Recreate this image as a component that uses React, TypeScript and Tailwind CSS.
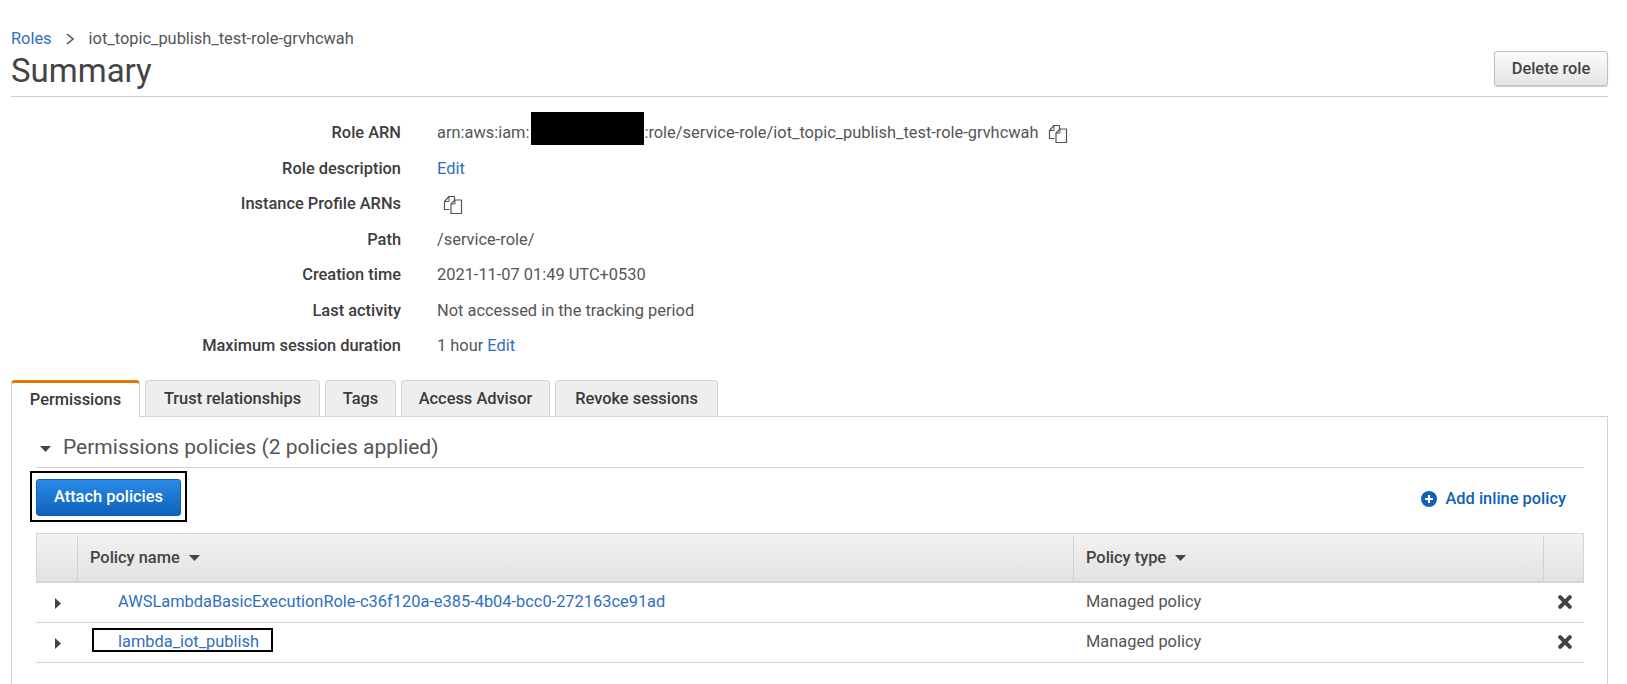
import React from "react";

const BLUE = "text-[#2f6fbd]";

function CopyIcon() {
  return (
    <svg width="20" height="20" viewBox="0 0 20 20" fill="none" stroke="#555" strokeWidth="1.2" strokeLinejoin="round">
      <path d="M6.5 14.5H1.5V6.5L6 1.5H11.5V5.5" fill="#fff" />
      <path d="M1.5 6.5H6V1.5" strokeWidth="1" />
      <path d="M8 9L12 5H18.5V18.5H8Z" fill="#fff" />
      <path d="M8 9H12V5" strokeWidth="1" />
    </svg>
  );
}

function Row({ label, children }: { label: string; children: React.ReactNode }) {
  return (
    <div className="flex h-[35.5px] items-center text-[16.4px]">
      <div className="w-[390px] text-right font-medium text-[#3d3d3d]">{label}</div>
      <div className="ml-[36px] flex items-center text-[#555]">{children}</div>
    </div>
  );
}

function Caret({ dir = "down", color = "#444" }: { dir?: "down" | "right"; color?: string }) {
  return dir === "down" ? (
    <svg width="11" height="6" viewBox="0 0 11 6"><path d="M0 0H11L5.5 6Z" fill={color} /></svg>
  ) : (
    <svg width="6" height="11" viewBox="0 0 6 11"><path d="M0 0L6 5.5L0 11Z" fill={color} /></svg>
  );
}

function XIcon() {
  return (
    <svg width="14" height="14" viewBox="0 0 14 14">
      <path d="M2.2 2.2L11.8 11.8M11.8 2.2L2.2 11.8" stroke="#444" strokeWidth="4" strokeLinecap="round" />
    </svg>
  );
}

function Tab({ label, width, active }: { label: string; width: string; active?: boolean }) {
  return active ? (
    <div className={`${width} -mb-px h-[37px] flex items-center justify-center rounded-t-[4px] border-x border-[#d5d5d5] border-t-[3px] border-t-[#e07b00] bg-white pt-[1px] text-[16.4px] font-medium text-[#3a3a3a] z-10`}>
      {label}
    </div>
  ) : (
    <div className={`${width} h-[36px] flex items-center justify-center rounded-t-[4px] border border-b-0 border-[#d5d5d5] bg-[#eeeeee] pt-[2px] text-[16.4px] font-medium text-[#3a3a3a]`}>
      {label}
    </div>
  );
}

function PolicyRow({ name, boxed }: { name: string; boxed?: boolean }) {
  return (
    <div className="flex h-[40px] items-center border-b border-[#d5d5d5] text-[16.4px]">
      <div className="flex w-[41px] justify-center pl-[2px] pt-[2px]"><Caret dir="right" /></div>
      <div className="relative w-[996px] pl-[41px]">
        <span className={BLUE}>{name}</span>
        {boxed && <div className="absolute left-[15px] top-[-2px] h-[24px] w-[181px] border-2 border-black" />}
      </div>
      <div className="w-[470px] pl-[13px] text-[#555]">Managed policy</div>
      <div className="flex flex-1 justify-center pl-[2px]"><XIcon /></div>
    </div>
  );
}

export default function App() {
  return (
    <div className="h-[684px] overflow-hidden bg-white pl-[11px] pr-[19px] pt-[29px] font-['Roboto','Liberation_Sans',sans-serif]">
      <div className="relative border-b border-[#cfcfcf] h-[68px]">
        <div className="flex items-center text-[16.4px] h-[20px]">
          <span className={BLUE}>Roles</span>
          <svg className="ml-[14px] mr-[15px]" width="8" height="12" viewBox="0 0 8 12" fill="none" stroke="#555" strokeWidth="1.5"><path d="M1 1L7 6L1 11" /></svg>
          <span className="text-[#555]">iot_topic_publish_test-role-grvhcwah</span>
        </div>
        <div className="text-[33px] leading-[38px] text-[#444] mt-[3px]">Summary</div>
        <button className="absolute right-0 top-[22px] h-[35px] w-[114px] rounded-[3px] border border-[#c0c0c0] bg-gradient-to-b from-[#fafafa] to-[#e6e6e6] pt-[1px] text-[16.4px] font-medium text-[#444] shadow-[0_1px_1px_rgba(0,0,0,0.2)]">
          Delete role
        </button>
      </div>

      <div className="pt-[19px]">
        <Row label="Role ARN">
          <span>arn:aws:iam:</span>
          <span className="ml-[2px] mb-[10px] inline-block h-[33px] w-[113px] bg-black" />
          <span>:role/service-role/iot_topic_publish_test-role-grvhcwah</span>
          <span className="ml-[10px] mt-[1px]"><CopyIcon /></span>
        </Row>
        <Row label="Role description"><span className={BLUE}>Edit</span></Row>
        <Row label="Instance Profile ARNs"><span className="ml-[6px]"><CopyIcon /></span></Row>
        <Row label="Path"><span>/service-role/</span></Row>
        <Row label="Creation time"><span>2021-11-07 01:49 UTC+0530</span></Row>
        <Row label="Last activity"><span>Not accessed in the tracking period</span></Row>
        <Row label="Maximum session duration"><span>1 hour&nbsp;</span><span className={BLUE}>Edit</span></Row>
      </div>

      <div className="mt-[15px] flex gap-[5px] items-end">
        <Tab label="Permissions" width="w-[129px]" active />
        <Tab label="Trust relationships" width="w-[175px]" />
        <Tab label="Tags" width="w-[71px]" />
        <Tab label="Access Advisor" width="w-[149px]" />
        <Tab label="Revoke sessions" width="w-[163px]" />
      </div>
      <div className="h-[300px] border-l border-t border-r border-[#d5d5d5] pl-[24px] pr-[23px]">
        <div className="flex h-[51px] items-center border-b border-[#d5d5d5] pt-[12px] text-[21px] text-[#555]">
          <span className="ml-[4px] mr-[12px] mt-[2px]"><Caret /></span>
          <span>Permissions policies (2 policies applied)</span>
        </div>
        <div className="flex h-[65px] items-start justify-between">
          <div className="ml-[-6px] mt-[3px] border-2 border-black px-[4px] pb-[4px] pt-[6px]">
            <button className="block h-[37px] w-[145px] rounded-[3px] border border-[#0f5fb0] bg-gradient-to-b from-[#2a8ae8] to-[#0d62b8] text-[16.4px] font-medium text-white">
              Attach policies
            </button>
          </div>
          <div className="mr-[18px] mt-[19px] flex items-center gap-[9px] text-[16.4px] font-medium text-[#0f62b8]">
            <svg width="16" height="16" viewBox="0 0 16 16">
              <circle cx="8" cy="8" r="8" fill="#0f62b8" />
              <path d="M8 4V12M4 8H12" stroke="#fff" strokeWidth="2.2" />
            </svg>
            <span>Add inline policy</span>
          </div>
        </div>
        <div className="border-t border-[#d5d5d5]">
          <div className="flex h-[49px] items-stretch border-b-2 border-x border-[#d5d5d5] bg-gradient-to-b from-[#f2f2f2] to-[#e2e2e2] pt-[2px] text-[16.4px] font-medium text-[#444]">
            <div className="w-[41px] border-r border-[#d0d0d0]" />
            <div className="flex w-[996px] items-center gap-[9px] border-r border-[#d0d0d0] pl-[12px]">
              <span>Policy name</span><Caret />
            </div>
            <div className="flex w-[470px] items-center gap-[9px] border-r border-[#d0d0d0] pl-[12px]">
              <span>Policy type</span><Caret />
            </div>
            <div className="flex-1" />
          </div>
          <PolicyRow name="AWSLambdaBasicExecutionRole-c36f120a-e385-4b04-bcc0-272163ce91ad" />
          <PolicyRow name="lambda_iot_publish" boxed />
        </div>
      </div>
    </div>
  );
}
